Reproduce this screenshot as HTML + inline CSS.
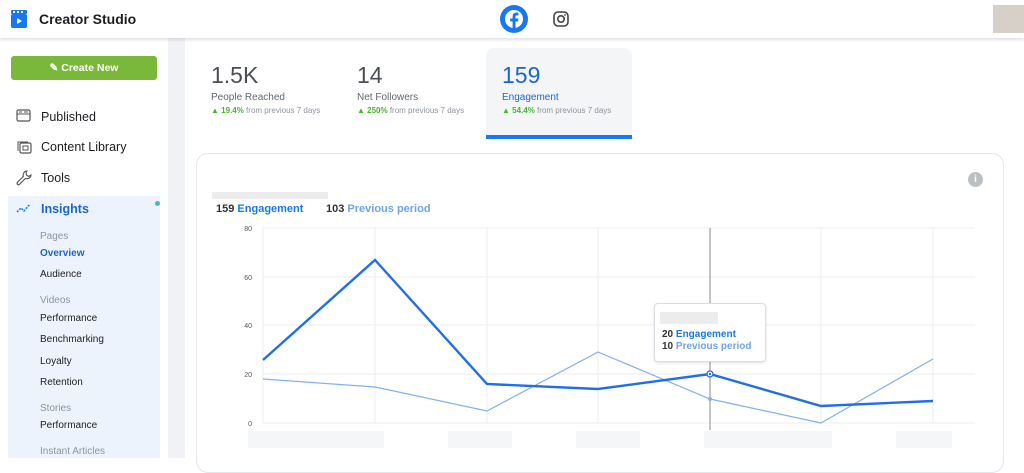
<!DOCTYPE html>
<html><head><style>
*{margin:0;padding:0;box-sizing:border-box}
body{width:1024px;height:458px;overflow:hidden;font-family:"Liberation Sans",sans-serif;background:#fff;position:relative;color:#1c1e21}
.a{position:absolute}
.hdr{left:0;top:0;width:1024px;height:38px;background:#fff;box-shadow:0 2px 3px rgba(0,0,0,.12);z-index:5}
.side{left:0;top:38px;width:168px;height:420px;background:#fff}
.gut{left:168px;top:38px;width:17px;height:420px;background:#f0f2f5}
.nav{font-size:12.5px;color:#1c1e21}
.sub{font-size:10px;left:40px}
.g{color:#8d949e}
.stat .n{font-size:23px;color:#4b4f56;line-height:24px}
.stat .l{font-size:10px;color:#606770;margin-top:5px}
.stat .d{font-size:8px;color:#8d949e;margin-top:3px}
.stat .d b{color:#42b72a}
</style></head><body>
<div class="a hdr">
 <svg class="a" style="left:11px;top:10px" width="16" height="18" viewBox="0 0 16 18"><rect x="0" y="4" width="16" height="14" rx="2" fill="#1877f2"/><rect x="0" y="0" width="16" height="4" rx="1" fill="#1877f2"/><rect x="2" y="1" width="2" height="2" fill="#fff"/><rect x="6" y="1" width="2" height="2" fill="#fff"/><rect x="10" y="1" width="2" height="2" fill="#fff"/><path d="M6 8 L11 11 L6 14Z" fill="#fff"/></svg>
 <div class="a" style="left:39px;top:11px;font-size:14px;font-weight:bold;color:#1c1e21">Creator Studio</div>
 <svg class="a" style="left:500px;top:5px" width="28" height="28" viewBox="0 0 28 28"><circle cx="14" cy="14" r="14" fill="#1877f2"/><circle cx="14" cy="14" r="9" fill="#fff"/><path d="M15.5 25V16.5H18L18.4 13.5H15.5V11.8C15.5 11 15.8 10.4 17 10.4H18.5V7.8C18.2 7.7 17.3 7.6 16.3 7.6C14.1 7.6 12.6 8.9 12.6 11.4V13.5H10.2V16.5H12.6V25Z" fill="#1877f2"/></svg>
 <svg class="a" style="left:553px;top:11px" width="16" height="16" viewBox="0 0 16 16"><rect x="1" y="1" width="14" height="14" rx="4" fill="none" stroke="#444" stroke-width="1.6"/><circle cx="8" cy="8" r="3.2" fill="none" stroke="#444" stroke-width="1.6"/><circle cx="12" cy="4" r=".9" fill="#444"/></svg>
 <div class="a" style="left:993px;top:5px;width:31px;height:28px;background:#d6d0c8"></div>
</div>
<div class="a side"></div>
<div class="a gut"></div>
<div class="a" style="left:11px;top:56px;width:146px;height:24px;background:#7ab83a;border-radius:3px;color:#fff;font-size:10.5px;font-weight:bold;text-align:center;line-height:24px">&#9998;&#xFE0E; Create New</div>
<svg class="a" style="left:16px;top:109px" width="16" height="14" viewBox="0 0 16 14"><rect x="1" y="1" width="13" height="11" rx="1.5" fill="none" stroke="#555" stroke-width="1.2"/><line x1="1" y1="5" x2="14" y2="5" stroke="#555"/><line x1="3" y1="3" x2="6" y2="3" stroke="#555"/><line x1="8" y1="3" x2="12" y2="3" stroke="#555"/></svg>
<div class="a nav" style="left:41px;top:110px">Published</div>
<svg class="a" style="left:16px;top:140px" width="16" height="14" viewBox="0 0 16 14"><rect x="4" y="3" width="11" height="10" rx="1.5" fill="none" stroke="#555" stroke-width="1.2"/><path d="M2 11V2H12" fill="none" stroke="#555"/><rect x="7" y="6" width="5" height="4" fill="none" stroke="#555"/></svg>
<div class="a nav" style="left:41px;top:140px">Content Library</div>
<svg class="a" style="left:16px;top:170px" width="16" height="16" viewBox="0 0 16 16"><path d="M11 1a4 4 0 0 0-3.6 5.4L1.5 12.3a1.3 1.3 0 0 0 2 2l5.9-5.9A4 4 0 0 0 15 5l-2.5 1.5-2-1.5L10 3Z" fill="none" stroke="#555" stroke-width="1.1"/></svg>
<div class="a nav" style="left:41px;top:171px">Tools</div>
<div class="a" style="left:8px;top:196px;width:152px;height:262px;background:#edf3fc"></div>
<div class="a" style="left:155px;top:201px;width:5px;height:5px;border-radius:50%;background:#44b7c9"></div>
<svg class="a" style="left:16px;top:202px" width="16" height="12" viewBox="0 0 16 12"><path d="M1 10L5 6L8 9L14 2" fill="none" stroke="#1877f2" stroke-width="1.6" stroke-dasharray="2 1.2"/></svg>
<div class="a nav" style="left:41px;top:202px;color:#1a65d6;font-weight:bold">Insights</div>
<div class="a sub g" style="top:231px">Pages</div>
<div class="a sub" style="top:248px;color:#1a65d6;font-weight:bold">Overview</div>
<div class="a sub" style="top:269px">Audience</div>
<div class="a sub g" style="top:295px">Videos</div>
<div class="a sub" style="top:313px">Performance</div>
<div class="a sub" style="top:334px">Benchmarking</div>
<div class="a sub" style="top:356px">Loyalty</div>
<div class="a sub" style="top:377px">Retention</div>
<div class="a sub g" style="top:403px">Stories</div>
<div class="a sub" style="top:420px">Performance</div>
<div class="a sub g" style="top:446px">Instant Articles</div>

<div class="a" style="left:486px;top:48px;width:146px;height:88px;background:#f4f5f7;border-radius:8px 8px 0 0"></div>
<div class="a" style="left:486px;top:135px;width:146px;height:4px;background:#1877f2"></div>
<div class="a stat" style="left:211px;top:63px"><div class="n">1.5K</div><div class="l">People Reached</div><div class="d"><b>&#9650; 19.4%</b> from previous 7 days</div></div>
<div class="a stat" style="left:357px;top:63px"><div class="n">14</div><div class="l">Net Followers</div><div class="d"><b>&#9650; 250%</b> from previous 7 days</div></div>
<div class="a stat" style="left:502px;top:63px"><div class="n" style="color:#1a65d6">159</div><div class="l" style="color:#1a65d6">Engagement</div><div class="d"><b>&#9650; 54.4%</b> from previous 7 days</div></div>

<div class="a" style="left:196px;top:153px;width:808px;height:320px;border:1px solid #e4e6eb;border-radius:12px"></div>
<div class="a" style="left:968px;top:172px;width:15px;height:15px;border-radius:50%;background:#bcc0c4;color:#fff;font-size:10px;font-weight:bold;text-align:center;line-height:15px">i</div>
<div class="a" style="left:212px;top:192px;width:116px;height:7px;background:#ececec"></div>
<div class="a" style="left:216px;top:203px;font-size:11px;font-weight:bold;color:#333">159 <span style="color:#1877f2">Engagement</span></div>
<div class="a" style="left:326px;top:203px;font-size:11px;font-weight:bold;color:#333">103 <span style="color:#6ea3f0">Previous period</span></div>

<svg class="a" style="left:0;top:0" width="1024" height="458">
 <g stroke="#eceef1" stroke-width="1">
  <line x1="263" y1="228" x2="975" y2="228"/><line x1="263" y1="277" x2="975" y2="277"/><line x1="263" y1="325" x2="975" y2="325"/><line x1="263" y1="374" x2="975" y2="374"/><line x1="263" y1="423" x2="975" y2="423"/>
  <line x1="263" y1="228" x2="263" y2="423"/><line x1="375" y1="228" x2="375" y2="423"/><line x1="487" y1="228" x2="487" y2="423"/><line x1="598" y1="228" x2="598" y2="423"/><line x1="821" y1="228" x2="821" y2="423"/><line x1="933" y1="228" x2="933" y2="423"/>
 </g>
 <g font-size="7" fill="#555" font-family="Liberation Sans" text-anchor="end">
  <text x="252" y="231">80</text><text x="252" y="280">60</text><text x="252" y="328">40</text><text x="252" y="377">20</text><text x="252" y="426">0</text>
 </g>
 <line x1="710" y1="228" x2="710" y2="430" stroke="#888" stroke-width="1"/>
 <polyline points="263,379 375,387 487,411 598,352 710,399 821,423 933,359" fill="none" stroke="#7fb0f5" stroke-width="1.2"/>
 <polyline points="263,360 375,260 487,384 598,389 710,374 821,406 933,401" fill="none" stroke="#1f6fe8" stroke-width="2.4"/>
 <circle cx="710" cy="374" r="3" fill="#fff" stroke="#1f6fe8" stroke-width="1.3"/><circle cx="710" cy="374" r="1.2" fill="#1f6fe8"/>
 <circle cx="710" cy="399" r="2" fill="#7fb0f5"/>
 <g fill="#f5f6f7"><rect x="248" y="431" width="136" height="17"/><rect x="448" y="431" width="64" height="17"/><rect x="576" y="431" width="64" height="17"/><rect x="704" y="431" width="128" height="17"/><rect x="896" y="431" width="56" height="17"/></g>
</svg>
<div class="a" style="left:654px;top:303px;width:112px;height:59px;background:#fff;border:1px solid #dadde1;border-radius:4px;box-shadow:0 1px 3px rgba(0,0,0,.12)">
 <div class="a" style="left:5px;top:8px;width:58px;height:12px;background:#ececec"></div>
 <div class="a" style="left:7px;top:25px;font-size:10px;font-weight:bold;color:#333">20 <span style="color:#1877f2">Engagement</span></div>
 <div class="a" style="left:7px;top:37px;font-size:10px;font-weight:bold;color:#333">10 <span style="color:#6ea3f0">Previous period</span></div>
</div>
</body></html>
